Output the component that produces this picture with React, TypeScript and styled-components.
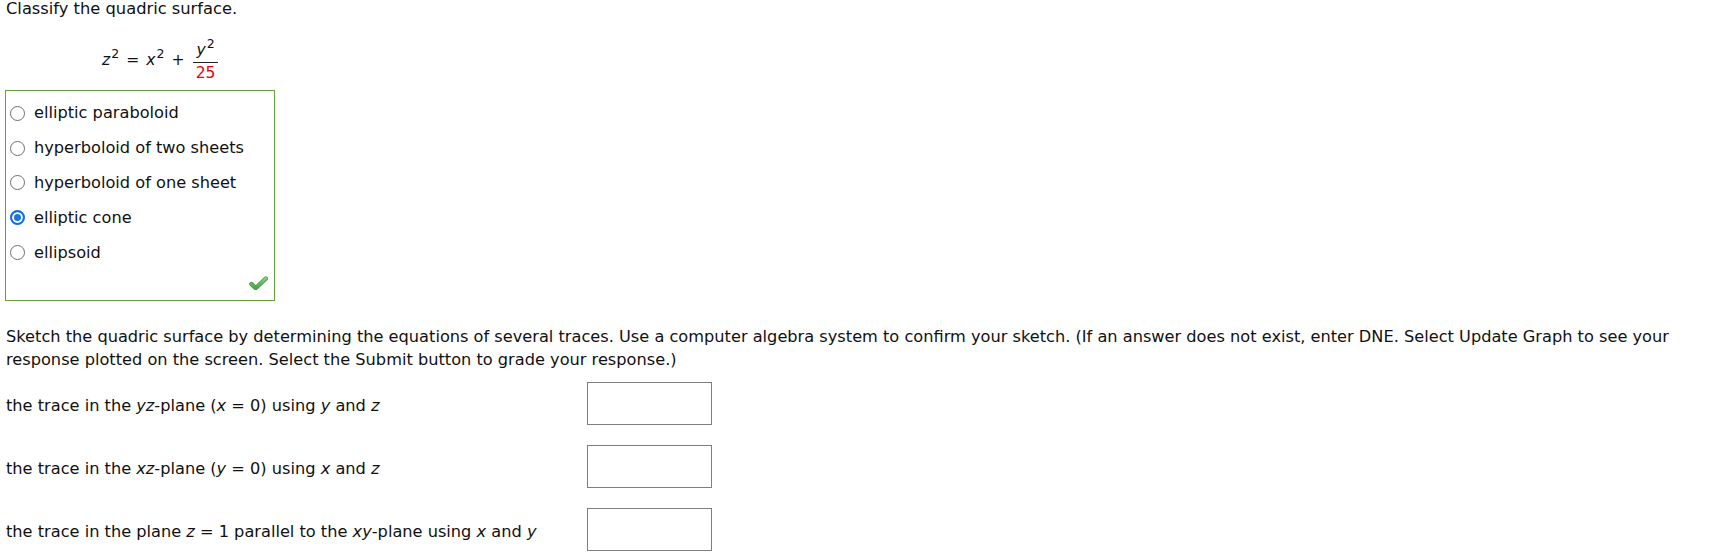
import React from "react";
import styled, { createGlobalStyle } from "styled-components";

const Global = createGlobalStyle`
  html, body { margin: 0; padding: 0; background: #fff; }
  body { font-family: "DejaVu Sans", Verdana, sans-serif; color: #111; }
`;

const Page = styled.div`
  padding: 0 5px;
  font-size: 16.2px;
  width: 1700px;
  box-sizing: border-box;
`;

const Heading = styled.div`
  line-height: 17px;
  padding-left: 1px;
  font-size: 16.3px;
`;

const Equation = styled.div`
  display: flex;
  align-items: center;
  margin: 18px 0 0 97px;
  height: 50px;
  font-size: 15.6px;
`;

const Var = styled.i`
  font-style: italic;
`;

const Sup = styled.sup`
  font-size: 12.5px;
  vertical-align: 0;
  position: relative;
  top: -7px;
  margin-left: 1px;
`;

const Op = styled.span`
  margin: 0 7px;
`;

const Frac = styled.span`
  display: inline-flex;
  flex-direction: column;
  align-items: center;
  margin-left: 2px;
  padding-top: 2px;
`;

const Num = styled.span`
  padding: 0 3px 2px;
  border-bottom: 1px solid #222;
  line-height: 18px;
`;

const Den = styled.span`
  color: #e8000b;
  line-height: 18px;
  padding-top: 1px;
`;

const ChoiceBox = styled.div`
  margin-top: 5px;
  width: 270px;
  height: 211px;
  box-sizing: border-box;
  border: 1px solid #63a335;
  display: flex;
  flex-direction: column;
  padding: 5px 0 0 4px;
`;

const Choices = styled.div`
  display: flex;
  flex-direction: column;
  flex: 1;
`;

const Choice = styled.label`
  display: flex;
  align-items: center;
  gap: 9px;
  height: 34.8px;
  line-height: 20px;
`;

const Radio = styled.span<{ $checked?: boolean }>`
  width: 15px;
  height: 15px;
  box-sizing: border-box;
  border-radius: 50%;
  border: ${(p) => (p.$checked ? "2px solid #0b6fe8" : "1px solid #6f6f6f")};
  background: ${(p) => (p.$checked ? "#1b74e8" : "#fff")};
  box-shadow: ${(p) => (p.$checked ? "inset 0 0 0 2px #fff" : "none")};
  flex: none;
`;

const Footer = styled.div`
  display: flex;
  justify-content: flex-end;
  padding: 0 6px 10px 0;
`;

const Para = styled.p`
  margin: 24px 0 0;
  line-height: 23px;
  padding-left: 1px;
`;

const Traces = styled.div`
  display: grid;
  grid-template-columns: 582px 125px;
  row-gap: 20px;
  margin-top: 11px;
  align-items: center;
`;

const Label = styled.div`
  padding-left: 1px;
  padding-top: 4px;
`;

const AnswerBox = styled.div`
  width: 125px;
  height: 43px;
  box-sizing: border-box;
  border: 1px solid #7e7e7e;
  background: #fff;
`;

const Check = () => (
  <svg width="19" height="14" viewBox="0 0 19 14">
    <defs>
      <linearGradient id="cg" x1="0" y1="0" x2="0" y2="1">
        <stop offset="0" stopColor="#86cf80" />
        <stop offset="1" stopColor="#4aa64a" />
      </linearGradient>
    </defs>
    <path
      d="M2.4 8 L6.8 12 L16.8 2.6"
      fill="none"
      stroke="#4f9a4f"
      strokeWidth="4.4"
      strokeLinecap="round"
      strokeLinejoin="round"
    />
    <path
      d="M2.4 8 L6.8 12 L16.8 2.6"
      fill="none"
      stroke="url(#cg)"
      strokeWidth="2.8"
      strokeLinecap="round"
      strokeLinejoin="round"
    />
  </svg>
);

const options = [
  "elliptic paraboloid",
  "hyperboloid of two sheets",
  "hyperboloid of one sheet",
  "elliptic cone",
  "ellipsoid",
];

export default function App() {
  return (
    <Page>
      <Global />
      <Heading>Classify the quadric surface.</Heading>
      <Equation>
        <Var>z</Var>
        <Sup>2</Sup>
        <Op>=</Op>
        <Var>x</Var>
        <Sup>2</Sup>
        <Op>+</Op>
        <Frac>
          <Num>
            <Var>y</Var>
            <Sup>2</Sup>
          </Num>
          <Den>25</Den>
        </Frac>
      </Equation>
      <ChoiceBox>
        <Choices>
          {options.map((o) => (
            <Choice key={o}>
              <Radio $checked={o === "elliptic cone"} />
              {o}
            </Choice>
          ))}
        </Choices>
        <Footer>
          <Check />
        </Footer>
      </ChoiceBox>
      <Para>
        Sketch the quadric surface by determining the equations of several traces. Use a computer
        algebra system to confirm your sketch. (If an answer does not exist, enter DNE. Select
        Update Graph to see your
        <br />
        response plotted on the screen. Select the Submit button to grade your response.)
      </Para>
      <Traces>
        <Label>
          the trace in the <Var>yz</Var>-plane (<Var>x</Var> = 0) using <Var>y</Var> and{" "}
          <Var>z</Var>
        </Label>
        <AnswerBox />
        <Label>
          the trace in the <Var>xz</Var>-plane (<Var>y</Var> = 0) using <Var>x</Var> and{" "}
          <Var>z</Var>
        </Label>
        <AnswerBox />
        <Label>
          the trace in the plane <Var>z</Var> = 1 parallel to the <Var>xy</Var>-plane using{" "}
          <Var>x</Var> and <Var>y</Var>
        </Label>
        <AnswerBox />
      </Traces>
    </Page>
  );
}
